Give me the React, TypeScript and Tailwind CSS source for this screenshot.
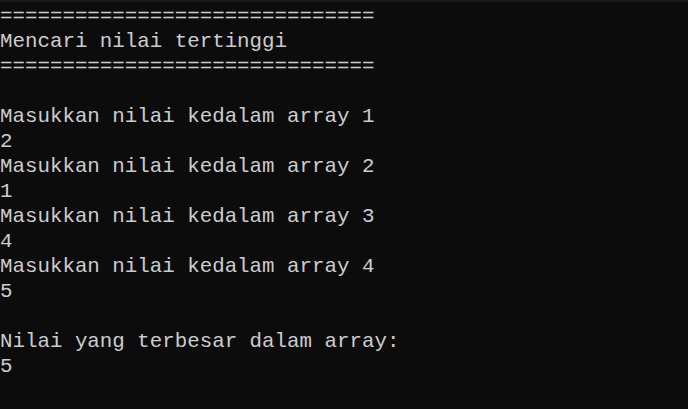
const lines = [
  '==============================',
  'Mencari nilai tertinggi',
  '==============================',
  '',
  'Masukkan nilai kedalam array 1',
  '2',
  'Masukkan nilai kedalam array 2',
  '1',
  'Masukkan nilai kedalam array 3',
  '4',
  'Masukkan nilai kedalam array 4',
  '5',
  '',
  'Nilai yang terbesar dalam array:',
  '5',
];

export default function App() {
  return (
    <div className="w-[688px] h-[409px] bg-[#0c0c0c] border-t-2 border-[#1a1a1a] overflow-hidden">
      <div className="pt-[2px] font-['Liberation_Mono',monospace] text-[20.8px] leading-[25px] text-[#cccccc] whitespace-pre">
        {lines.map((line, i) => (
          <div key={i} className="h-[25px]">
            {line}
          </div>
        ))}
      </div>
    </div>
  );
}
